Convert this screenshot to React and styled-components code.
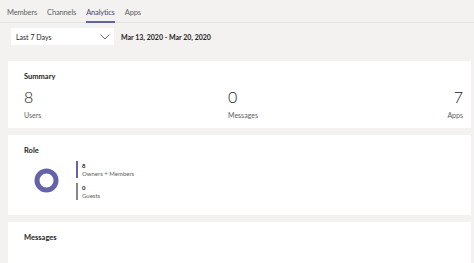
import React from 'react'
import styled, { createGlobalStyle } from 'styled-components'

const GlobalStyle = createGlobalStyle`
    html, body {
        margin: 0;
        padding: 0;
        background: #f3f2f1;
        font-family: Lato, "Open Sans", sans-serif;
        color: #252423;
    }
`

const tabs = ['Members', 'Channels', 'Analytics', 'Apps']

const stats = [
    { value: '8', label: 'Users', align: 'flex-start' },
    { value: '0', label: 'Messages', align: 'flex-start' },
    { value: '7', label: 'Apps', align: 'flex-end' },
]

function Chevron() {
    return (
        <svg width="10" height="6" viewBox="0 0 10 6">
            <path d="M0.5 0.5 L5 5 L9.5 0.5" fill="none" stroke="#605e5c" strokeWidth="0.9" />
        </svg>
    )
}

function Donut() {
    return (
        <svg width="25" height="25" viewBox="0 0 25 25">
            <circle cx="12.5" cy="12.5" r="9.5" fill="none" stroke="#6264a7" strokeWidth="5" />
        </svg>
    )
}

function App() {
    return (
        <>
            <GlobalStyle />
            <Page>
                <TabBar>
                    {tabs.map((t) => (
                        <Tab key={t} active={t === 'Analytics'}>{t}</Tab>
                    ))}
                </TabBar>

                <Toolbar>
                    <Select>
                        <span>Last 7 Days</span>
                        <Chevron />
                    </Select>
                    <DateRange>Mar 13, 2020 - Mar 20, 2020</DateRange>
                </Toolbar>

                <Cards>
                    <Card height={67}>
                        <CardTitle>Summary</CardTitle>
                        <StatRow>
                            {stats.map((s) => (
                                <Stat key={s.label} align={s.align}>
                                    <StatValue>{s.value}</StatValue>
                                    <StatLabel>{s.label}</StatLabel>
                                </Stat>
                            ))}
                        </StatRow>
                    </Card>

                    <Card height={80}>
                        <CardTitle>Role</CardTitle>
                        <RoleRow>
                            <DonutBox>
                                <Donut />
                            </DonutBox>
                            <Legend>
                                <LegendItem color="#6264a7">
                                    <b>8</b>
                                    <span>Owners + Members</span>
                                </LegendItem>
                                <LegendItem color="#8a8886">
                                    <b>0</b>
                                    <span>Guests</span>
                                </LegendItem>
                            </Legend>
                        </RoleRow>
                    </Card>

                    <Card height={60}>
                        <CardTitle>Messages</CardTitle>
                    </Card>
                </Cards>
            </Page>
        </>
    )
}

export default App

const Page = styled.div`
    width: 474px;
    height: 263px;
    overflow: hidden;
    background: #f3f2f1;
`

const TabBar = styled.div`
    display: flex;
    align-items: flex-end;
    gap: 10px;
    height: 23px;
    padding-left: 7px;
    border-bottom: 1px solid #e6e4e2;
    box-sizing: border-box;
`

const Tab = styled.div`
    font-size: 7.5px;
    letter-spacing: -0.15px;
    line-height: 11px;
    padding-bottom: 3px;
    color: ${(p) => (p.active ? '#464775' : '#616161')};
    border-bottom: 2px solid ${(p) => (p.active ? '#6264a7' : 'transparent')};
    margin-bottom: -1px;
`

const Toolbar = styled.div`
    display: flex;
    align-items: center;
    gap: 7px;
    padding: 5px 0 0 11px;
`

const Select = styled.div`
    display: flex;
    align-items: center;
    justify-content: space-between;
    width: 103px;
    height: 17px;
    padding: 0 4px 0 5px;
    box-sizing: border-box;
    background: #fff;
    font-size: 7px;
    color: #252423;
`

const DateRange = styled.div`
    font-size: 7px;
    font-weight: 700;
    color: #252423;
`

const Cards = styled.div`
    display: flex;
    flex-direction: column;
    gap: 7px;
    padding: 16px 3px 0 8px;
`

const Card = styled.div`
    background: #fff;
    height: ${(p) => p.height}px;
    padding: 11px 8px 0 16px;
    box-sizing: border-box;
    flex-shrink: 0;
`

const CardTitle = styled.div`
    font-size: 7.5px;
    font-weight: 700;
    color: #252423;
    line-height: 10px;
`

const StatRow = styled.div`
    display: grid;
    grid-template-columns: 204px 1fr auto;
    margin-top: 4px;
`

const Stat = styled.div`
    display: flex;
    flex-direction: column;
    align-items: ${(p) => p.align};
`

const StatValue = styled.div`
    font-size: 16px;
    line-height: 22px;
    font-weight: 300;
    color: #252423;
`

const StatLabel = styled.div`
    font-size: 7px;
    line-height: 10px;
    color: #605e5c;
    margin-top: 2px;
`

const RoleRow = styled.div`
    display: flex;
    align-items: flex-start;
    gap: 17px;
    padding-left: 10px;
    margin-top: 5px;
`

const DonutBox = styled.div`
    padding-top: 7px;
`

const Legend = styled.div`
    display: flex;
    flex-direction: column;
    gap: 5px;
`

const LegendItem = styled.div`
    display: flex;
    flex-direction: column;
    border-left: 2px solid ${(p) => p.color};
    padding: 1px 0 0 4px;
    font-size: 6px;
    line-height: 8px;
    color: #605e5c;

    > b {
        color: #252423;
        font-weight: 700;
    }
`
